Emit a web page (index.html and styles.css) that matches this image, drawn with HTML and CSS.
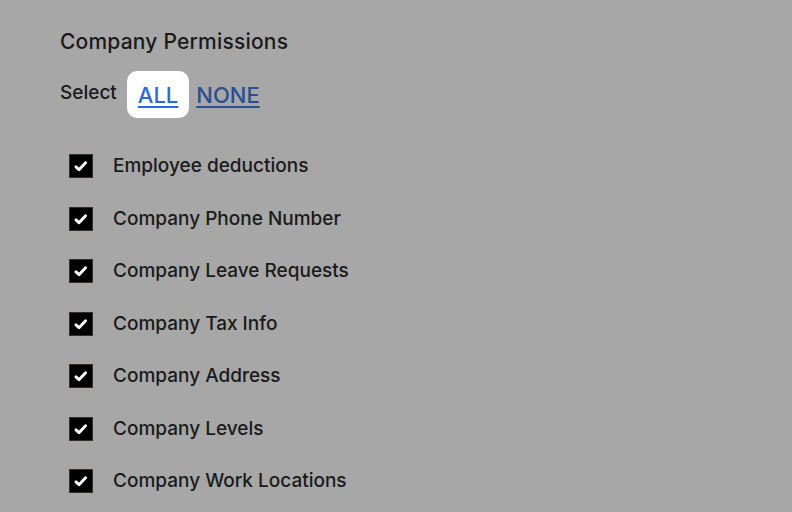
FILE: index.html
```html
<!DOCTYPE html>
<html lang="en">
<head>
  <meta charset="UTF-8">
  <title>Company Permissions</title>
  <link rel="stylesheet" href="styles.css">
</head>
<body>
  <div class="perm-panel">
    <h2 class="perm-title">Company Permissions</h2>
    <div class="select-row">
      <span>Select</span>
      <a href="#" class="select-link spotlight">ALL</a>
      <a href="#" class="select-link">NONE</a>
    </div>
    <ul class="perm-list">
      <li><span class="check"><svg viewBox="0 0 24 24" width="24" height="24"><path d="M6.5 13l3.3 3L17 8.5" fill="none" stroke="#fff" stroke-width="3.2" stroke-linecap="round" stroke-linejoin="round"/></svg></span>Employee deductions</li>
      <li><span class="check"><svg viewBox="0 0 24 24" width="24" height="24"><path d="M6.5 13l3.3 3L17 8.5" fill="none" stroke="#fff" stroke-width="3.2" stroke-linecap="round" stroke-linejoin="round"/></svg></span>Company Phone Number</li>
      <li><span class="check"><svg viewBox="0 0 24 24" width="24" height="24"><path d="M6.5 13l3.3 3L17 8.5" fill="none" stroke="#fff" stroke-width="3.2" stroke-linecap="round" stroke-linejoin="round"/></svg></span>Company Leave Requests</li>
      <li><span class="check"><svg viewBox="0 0 24 24" width="24" height="24"><path d="M6.5 13l3.3 3L17 8.5" fill="none" stroke="#fff" stroke-width="3.2" stroke-linecap="round" stroke-linejoin="round"/></svg></span>Company Tax Info</li>
      <li><span class="check"><svg viewBox="0 0 24 24" width="24" height="24"><path d="M6.5 13l3.3 3L17 8.5" fill="none" stroke="#fff" stroke-width="3.2" stroke-linecap="round" stroke-linejoin="round"/></svg></span>Company Address</li>
      <li><span class="check"><svg viewBox="0 0 24 24" width="24" height="24"><path d="M6.5 13l3.3 3L17 8.5" fill="none" stroke="#fff" stroke-width="3.2" stroke-linecap="round" stroke-linejoin="round"/></svg></span>Company Levels</li>
      <li><span class="check"><svg viewBox="0 0 24 24" width="24" height="24"><path d="M6.5 13l3.3 3L17 8.5" fill="none" stroke="#fff" stroke-width="3.2" stroke-linecap="round" stroke-linejoin="round"/></svg></span>Company Work Locations</li>
    </ul>
  </div>
</body>
</html>
```

FILE: styles.css
```css
body {
  margin: 0;
  background: #a7a7a7;
  font-family: Inter, "Noto Sans", sans-serif;
  color: #1a1a1a;
  overflow: hidden;
}
.perm-panel {
  padding: 30px 60px 0;
}
.perm-title {
  margin: 0;
  font-size: 21px;
  font-weight: 500;
  line-height: 24px;
  letter-spacing: 0.2px;
}
.select-row {
  display: flex;
  align-items: center;
  margin-top: 17px;
  font-size: 19px;
  font-weight: 500;
}
.select-row > span {
  position: relative;
  top: -2px;
}
.select-link {
  font-size: 22px;
  color: #2a4f90;
  text-decoration: underline;
  text-underline-offset: 3px;
  text-decoration-thickness: 2px;
}
.spotlight {
  background: #fff;
  color: #2a6ae0;
  border-radius: 10px;
  padding: 11px 11px 10px;
  margin: 0 7px 0 10px;
}
.perm-list {
  list-style: none;
  margin: 36px 0 0;
  padding: 0 0 0 9px;
  display: flex;
  flex-direction: column;
  gap: 28.5px;
}
.perm-list li {
  display: flex;
  align-items: center;
  gap: 20px;
  font-size: 19px;
  font-weight: 500;
  line-height: 24px;
}
.check {
  width: 24px;
  height: 24px;
  background: #000;
  border: 1px solid #3a3020;
  box-sizing: border-box;
  display: flex;
  align-items: center;
  justify-content: center;
}
.check svg {
  display: block;
}
```
